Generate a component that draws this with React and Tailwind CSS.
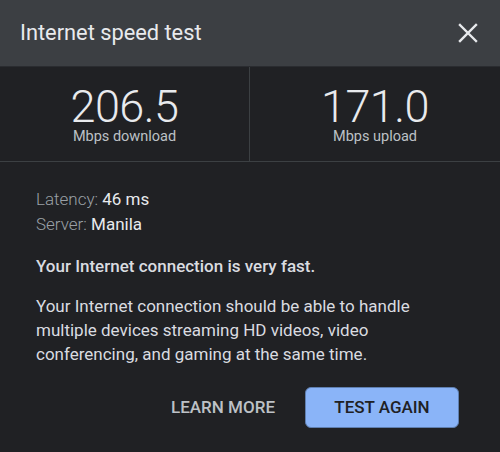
import React from "react";

const Stat = ({ value, label, border }) => (
  <div
    className={`flex flex-col items-center pt-[18px] ${border ? "border-r border-[#3c4043]" : ""}`}
  >
    <div className="text-[45px] leading-[44px] font-light text-[#e8eaed] tracking-[-0.5px]">
      {value}
    </div>
    <div className="text-[14.5px] leading-[16px] text-[#bdc1c6]">{label}</div>
  </div>
);

const App = () => {
  return (
    <div
      className="w-[500px] h-[452px] bg-[#202124] overflow-hidden"
      style={{ fontFamily: "Roboto, 'Noto Sans', sans-serif" }}
    >
      <div className="h-[67px] bg-[#3c3f43] flex items-center justify-between pl-[20px] pr-[22px] border-b border-[#2a2c30]">
        <h1 className="text-[21.8px] text-[#e8eaed] font-normal">Internet speed test</h1>
        <svg width="20" height="20" viewBox="0 0 20 20" className="text-[#e8eaed]">
          <path d="M2 2 L18 18 M18 2 L2 18" stroke="currentColor" strokeWidth="2.4" strokeLinecap="square" />
        </svg>
      </div>
      <div className="grid grid-cols-2 h-[95px] border-b border-[#3c4043]">
        <Stat value="206.5" label="Mbps download" border />
        <Stat value="171.0" label="Mbps upload" />
      </div>
      <div className="pl-[36px] pr-[30px] pt-[25px]">
        <div className="text-[17px] leading-[25px]">
          <div>
            <span className="font-light text-[#9aa0a6]">Latency: </span>
            <span className="text-[#e8eaed]">46 ms</span>
          </div>
          <div>
            <span className="font-light text-[#9aa0a6]">Server: </span>
            <span className="text-[#e8eaed]">Manila</span>
          </div>
        </div>
        <p className="mt-[17px] text-[17px] leading-[24px] font-medium text-[#dadce0]">
          Your Internet connection is very fast.
        </p>
        <p className="mt-[16px] text-[17px] leading-[24px] text-[#dadce0]">
          Your Internet connection should be able to handle multiple devices streaming HD videos, video
          conferencing, and gaming at the same time.
        </p>
        <div className="flex justify-end items-center mt-[21px] pr-[11px] gap-[29px]">
          <button className="h-[41px] px-[1px] text-[17px] font-medium text-[#bdc1c6]">
            LEARN MORE
          </button>
          <button className="h-[41px] w-[154px] rounded-[6px] bg-[#8ab4f8] border border-[#5f7fb0] text-[17px] font-medium text-[#202124]">
            TEST AGAIN
          </button>
        </div>
      </div>
    </div>
  );
};

export default App;
